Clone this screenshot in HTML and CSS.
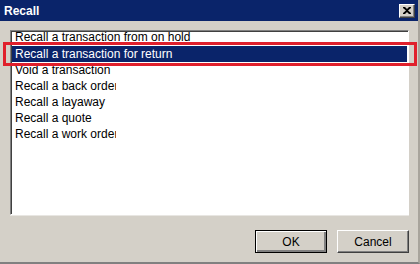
FILE: index.html
```html
<!DOCTYPE html>
<html lang="en">
<head>
  <meta charset="UTF-8" />
  <title>Recall</title>
  <link rel="stylesheet" href="styles.css">
</head>
<body>
  <div class="window">
    <div class="titlebar">
      <span class="title">Recall</span>
      <div class="close-btn">
        <svg width="8" height="7" viewBox="0 0 8 7"><path d="M0 0h2l2 2 2-2h2v1L5 3.5 8 6v1H6L4 5 2 7H0V6l3-2.5L0 1z" fill="#000"/></svg>
      </div>
    </div>

    <div class="content">
      <ul class="list">
        <li>Recall a transaction from on hold</li>
        <li class="selected">Recall a transaction for return</li>
        <li>Void a transaction</li>
        <li>Recall a back orde<span class="cut">r</span></li>
        <li>Recall a layaway</li>
        <li>Recall a quote</li>
        <li>Recall a work orde<span class="cut">r</span></li>
      </ul>

      <div class="buttons">
        <button class="btn default">OK</button>
        <button class="btn">Cancel</button>
      </div>
    </div>

    <div class="highlight"></div>
  </div>
</body>
</html>
```

FILE: styles.css
```css
* {
  box-sizing: border-box;
  margin: 0;
  padding: 0;
}
body {
  font-family: "Liberation Sans", Arial, sans-serif;
  background-color: #d4d0c8;
  color: #000;
}
.window {
  position: relative;
  width: 420px;
  height: 264px;
  background-color: #d4d0c8;
  border-right: 2px solid #a8a49c;
  border-bottom: 2px solid #808080;
  display: flex;
  flex-direction: column;
}
.titlebar {
  height: 21px;
  background-color: #0a246a;
  display: flex;
  align-items: center;
  justify-content: space-between;
  padding: 0 3px 0 4px;
}
.title {
  color: #fff;
  font-weight: bold;
  font-size: 12px;
}
.close-btn {
  width: 16px;
  height: 14px;
  background-color: #d4d0c8;
  border-top: 1px solid #fff;
  border-left: 1px solid #fff;
  border-right: 1px solid #404040;
  border-bottom: 1px solid #404040;
  box-shadow: inset -1px -1px 0 #808080;
  display: flex;
  align-items: center;
  justify-content: center;
}
.content {
  padding: 9px 9px 0 10px;
}
.list {
  list-style-type: none;
  width: 399px;
  height: 185px;
  background-color: #fff;
  border-top: 1px solid #808080;
  border-left: 1px solid #808080;
  border-right: 1px solid #fff;
  border-bottom: 1px solid #fff;
  box-shadow: inset 1px 1px 0 #404040, 0 1px 0 #e8e6e2;
  padding: 0 1px;
  overflow: hidden;
}
.list li {
  height: 16px;
  line-height: 16px;
  font-size: 12px;
  padding-left: 3px;
  white-space: nowrap;
}
.list li:first-child {
  height: 15px;
  line-height: 12px;
}
.list li.selected {
  background-color: #0a246a;
  color: #fff;
}
.cut {
  display: inline-block;
  width: 2px;
  overflow: hidden;
  vertical-align: top;
}
.buttons {
  display: flex;
  justify-content: flex-end;
  gap: 10px;
  margin-top: 15px;
}
.btn {
  width: 72px;
  height: 23px;
  font-family: "Liberation Sans", Arial, sans-serif;
  font-size: 12px;
  background-color: #d4d0c8;
  border-top: 1px solid #fff;
  border-left: 1px solid #fff;
  border-right: 1px solid #404040;
  border-bottom: 1px solid #404040;
  box-shadow: inset -1px -1px 0 #808080;
}
.btn.default {
  border: 1px solid #000;
  box-shadow: inset 1px 1px 0 #fff, inset -2px -2px 0 #808080;
}
.highlight {
  position: absolute;
  left: 3px;
  top: 42px;
  width: 414px;
  height: 24px;
  border: 3px solid #e0202c;
}
```
